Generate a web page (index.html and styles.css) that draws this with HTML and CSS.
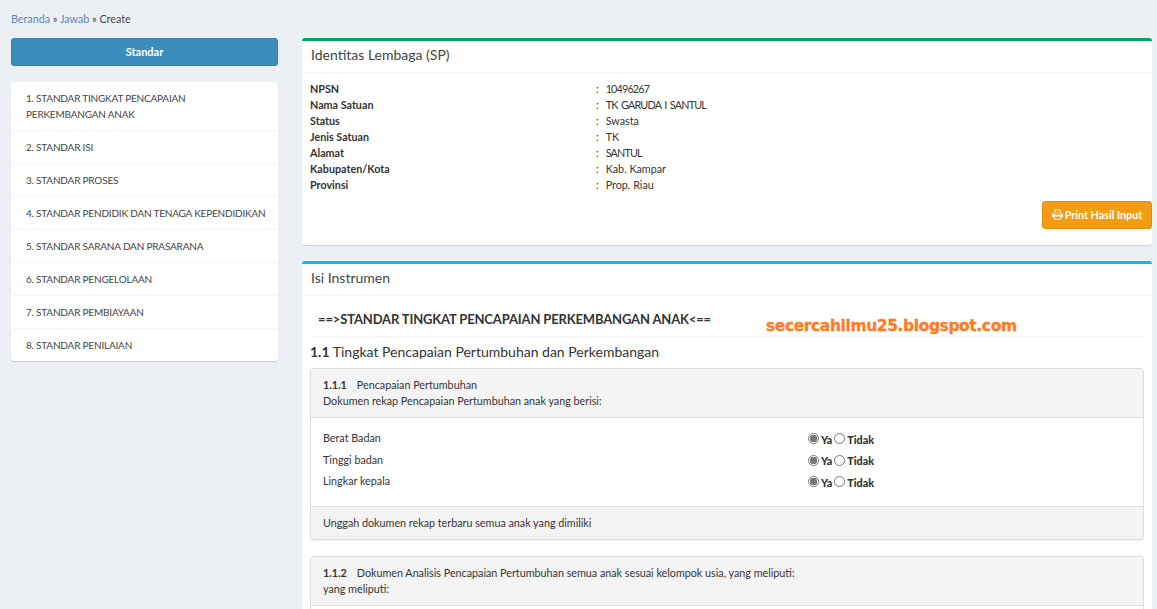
FILE: index.html
```html
<!DOCTYPE html>
<html lang="id">
<head>
<meta charset="utf-8">
<title>Create</title>
<link rel="stylesheet" href="styles.css">
</head>
<body>
<div class="page">
  <nav class="crumbs"><a>Beranda</a> » <a>Jawab</a> » Create</nav>
  <div class="columns">
    <aside class="side">
      <button class="btn-std">Standar</button>
      <ul class="menu">
        <li>1. STANDAR TINGKAT PENCAPAIAN PERKEMBANGAN ANAK</li>
        <li>2. STANDAR ISI</li>
        <li>3. STANDAR PROSES</li>
        <li>4. STANDAR PENDIDIK DAN TENAGA KEPENDIDIKAN</li>
        <li>5. STANDAR SARANA DAN PRASARANA</li>
        <li>6. STANDAR PENGELOLAAN</li>
        <li>7. STANDAR PEMBIAYAAN</li>
        <li>8. STANDAR PENILAIAN</li>
      </ul>
    </aside>
    <main class="main">
      <section class="box box-green">
        <h3 class="box-title">Identitas Lembaga (SP)</h3>
        <div class="box-body identitas">
          <dl class="info">
            <dt>NPSN</dt><dd class="tight">10496267</dd>
            <dt>Nama Satuan</dt><dd class="tight">TK GARUDA I SANTUL</dd>
            <dt>Status</dt><dd>Swasta</dd>
            <dt>Jenis Satuan</dt><dd>TK</dd>
            <dt>Alamat</dt><dd class="tight">SANTUL</dd>
            <dt>Kabupaten/Kota</dt><dd>Kab. Kampar</dd>
            <dt>Provinsi</dt><dd>Prop. Riau</dd>
          </dl>
          <div class="actions">
            <button class="btn-print">
              <svg class="ico" viewBox="0 0 14 13" width="11" height="11" aria-hidden="true"><path fill="#fff" d="M3 0h6.500L11 1.500V5H3zM4 1v3.200h6V2H8.800V1zM1.500 5.200H2.200V6.800h9.600V5.200h.7c.8 0 1.500.7 1.500 1.500V10h-2.500v3h-9V10H0V6.700c0-.8.7-1.500 1.500-1.500zM3.500 9v3h7V9z"/></svg>
              Print Hasil Input
            </button>
          </div>
        </div>
      </section>
      <section class="box box-blue">
        <h3 class="box-title">Isi Instrumen</h3>
        <div class="box-body isi">
          <h4 class="std-head">==&gt;STANDAR TINGKAT PENCAPAIAN PERKEMBANGAN ANAK&lt;==</h4>
          <span class="watermark">secercahilmu25.blogspot.com</span>
          <h4 class="sub-head"><b>1.1</b> Tingkat Pencapaian Pertumbuhan dan Perkembangan</h4>
          <div class="panel">
            <div class="panel-head"><b>1.1.1</b><span class="gap"></span>Pencapaian Pertumbuhan<br>Dokumen rekap Pencapaian Pertumbuhan anak yang berisi:</div>
            <div class="panel-body">
              <div class="q"><span class="q-label">Berat Badan</span><span class="q-opts"><input type="radio" name="a" checked><b>Ya</b><input type="radio" name="a"><b>Tidak</b></span></div>
              <div class="q"><span class="q-label">Tinggi badan</span><span class="q-opts"><input type="radio" name="b" checked><b>Ya</b><input type="radio" name="b"><b>Tidak</b></span></div>
              <div class="q"><span class="q-label">Lingkar kepala</span><span class="q-opts"><input type="radio" name="c" checked><b>Ya</b><input type="radio" name="c"><b>Tidak</b></span></div>
            </div>
            <div class="panel-foot">Unggah dokumen rekap terbaru semua anak yang dimiliki</div>
          </div>
          <div class="panel">
            <div class="panel-head"><b>1.1.2</b><span class="gap"></span>Dokumen Analisis Pencapaian Pertumbuhan semua anak sesuai kelompok usia, yang meliputi:<br>yang meliputi:</div>
            <div class="panel-body tall"></div>
          </div>
        </div>
      </section>
    </main>
  </div>
</div>
</body>
</html>
```
FILE: styles.css
```css
* { box-sizing: border-box; }
html, body { margin: 0; height: 609px; overflow: hidden; }
body { background: #ecf0f5; color: #333; font: 10.750px/16px Lato, "Open Sans", sans-serif; }
.page { padding: 11px 5px 0 11px; }
.crumbs { height: 27px; line-height: 15px; color: #444; }
.crumbs a { color: #5b86b3; }
.columns { display: flex; gap: 24px; align-items: flex-start; }
.side { width: 267px; flex: none; }
.main { flex: 1; min-width: 0; }
.btn-std { display: block; width: 100%; height: 28px; margin: 0 0 16px; padding: 0 0 2px; background: #3c8dbc; border: 1px solid #367fa9; border-radius: 3px; color: #fff; font: 700 11px Lato, sans-serif; }
.menu { list-style: none; margin: 0; padding: 0; background: #fff; border-radius: 3px; box-shadow: 0 1px 1px rgba(0,0,0,.15); }
.menu li { padding: 8px 5px 8px 15px; border-bottom: 1px solid #f4f4f4; color: #444; font-size: 10px; letter-spacing: -.2px; }
.menu li:first-child { padding-right: 15px; }
.menu li:last-child { border-bottom: 0; }
.box { background: #fff; border-top: 3px solid #00a65a; border-radius: 3px; box-shadow: 0 1px 1px rgba(0,0,0,.15); margin-bottom: 16px; }
.box-blue { border-top-color: #00c0ef; }
.box-title { margin: 0; height: 32px; padding: 0 9px; border-bottom: 1px solid #f4f4f4; font: 400 14px/28px Lato, sans-serif; color: #444; }
.identitas { padding: 8px 0 16px 8px; height: 172px; }
.info { display: grid; grid-template-columns: 286px 1fr; margin: 0; }
.info dt { font-weight: 700; }
.info dd { margin: 0; padding-left: 9px; }
.info dd::before { content: ":"; margin-right: 7px; margin-left: -9px; letter-spacing: 0; }
.info dd.tight { letter-spacing: -.8px; word-spacing: 1.500px; }
.actions { display: flex; justify-content: flex-end; margin-top: 8px; }
.btn-print { height: 28px; width: 110px; padding: 0 0 2px; background: #f39c12; border: 1px solid #e08e0b; border-radius: 3px; color: #fff; font: 700 10.750px Lato, sans-serif; display: flex; align-items: center; justify-content: center; gap: 2px; }
.isi { padding: 0 8px; position: relative; }
.std-head { margin: 0; padding: 15px 8px 8px; height: 41px; border-bottom: 1px solid #f4f4f4; font: 700 13px/17px Lato, sans-serif; letter-spacing: -.15px; color: #333; }
.watermark { position: absolute; left: 464px; top: 19px; color: #ff7a22; font: 700 15.500px/22px "DejaVu Sans", sans-serif; letter-spacing: -.4px; -webkit-text-stroke: .3px #ff7a22; }
.sub-head { margin: 0; padding-top: 7px; height: 31px; font: 400 14px/16px Lato, sans-serif; color: #333; }
.panel { border: 1px solid #ddd; border-radius: 3px; box-shadow: 0 1px 1px rgba(0,0,0,.05); margin-bottom: 16px; }
.panel-head { padding: 8px 12px; background: #f4f4f4; border-bottom: 1px solid #ddd; height: 49px; }
.gap { display: inline-block; width: 10px; }
.panel-body { padding: 10px 12px 0; height: 88px; }
.panel-body.tall { height: 60px; }
.panel-foot { padding: 8px 12px; height: 33px; background: #f4f4f4; border-top: 1px solid #ddd; }
.q { display: flex; height: 21.500px; align-items: center; }
.q-label { width: 485px; flex: none; padding-bottom: 1px; }
.q-opts { display: flex; align-items: center; font-weight: 700; gap: 2px; }
.q-opts input { appearance: none; width: 11px; height: 11px; margin: 0; border: 1px solid #767676; border-radius: 50%; background: #fff; }
.q-opts input:checked { background: radial-gradient(circle, #767676 0 3.500px, #fff 4px); }
.q-opts b { padding-top: 2px; }
```
